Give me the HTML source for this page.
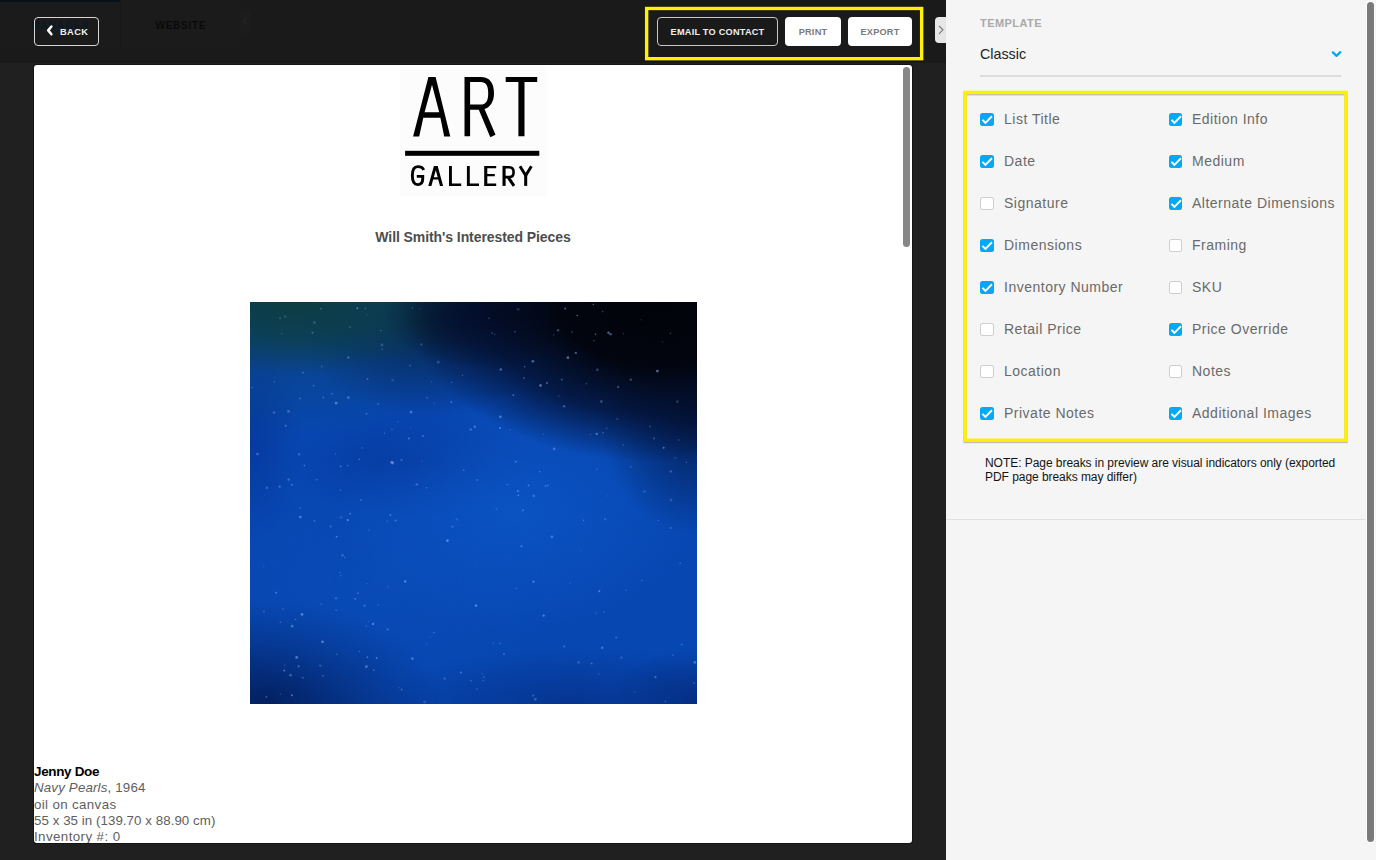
<!DOCTYPE html>
<html><head><meta charset="utf-8">
<style>
*{box-sizing:border-box;margin:0;padding:0}
html,body{width:1376px;height:860px;overflow:hidden;background:#202020;font-family:"Liberation Sans",sans-serif}
.abs{position:absolute}
#topbar{left:0;top:0;width:946px;height:63px;background:#1a1a1a}
#navline{left:0;top:0;width:120px;height:2px;background:#07111b}
.ghost{position:absolute;font-weight:bold;font-size:10px;letter-spacing:1px;white-space:nowrap}
.btn{position:absolute;border-radius:4px;font-weight:bold;font-size:9.2px;letter-spacing:0.22px;text-align:center;white-space:nowrap}
#back{left:34px;top:17px;width:65px;height:29px;border:1.5px solid #d6d6d6;color:#f4f4f4}
#email{left:657px;top:17px;width:121px;height:29px;border:1.5px solid #c8c8c8;color:#f0f0f0;line-height:28px}
#print{left:785px;top:17px;width:56px;height:29px;background:#fff;color:#7a7a7a;line-height:31px}
#export{left:848px;top:17px;width:64px;height:29px;background:#fff;color:#7a7a7a;line-height:31px}
#ybox1{left:645px;top:7px;width:278px;height:54px;border:3.5px solid #fff200}
#rtab{left:935px;top:17px;width:11px;height:26px;background:#e6e6e6;border-radius:4px 0 0 4px}
#page{left:34px;top:65px;width:878px;height:778px;background:#fff;border-radius:3px;overflow:hidden;box-shadow:0 0 0 1px #141414}
#pscroll{left:903px;top:67px;width:6.5px;height:180px;background:#878787;border-radius:3.5px}
#right{left:946px;top:0;width:430px;height:860px;background:#f5f5f5}
#rscroll{left:1367px;top:2px;width:7px;height:840px;background:#7a7a7a;border-radius:3.5px;box-shadow:0 0 0 1px #fff}
#ybox2{left:963.5px;top:90.5px;width:384.5px;height:351.5px;border:3.5px solid #ffee00;box-shadow:inset 0 1px 2px rgba(0,0,0,.25),0 1px 2px rgba(0,0,0,.2)}
.cb{position:absolute;width:13.6px;height:13.4px;border-radius:2.5px;background:#fff;box-shadow:inset 0 0 0 1px #cfcfcf}
.cb.on{background:#03a9f4;box-shadow:none}
.cb svg{position:absolute;left:0;top:0}
.lbl{position:absolute;font-size:14px;color:#6a6a6a;letter-spacing:0.5px;white-space:nowrap;line-height:22px}

.ml{position:absolute;left:0;white-space:nowrap}
#artbg{left:249.5px;top:301.5px;width:447px;height:402.5px;background:
radial-gradient(ellipse 58% 40% at 92% 0%, #010309 0%, #02050f 40%, rgba(3,12,40,.75) 70%, rgba(3,30,100,0) 100%),
radial-gradient(ellipse 22% 30% at 100% 28%, rgba(2,12,40,.7) 0%, rgba(3,30,100,0) 100%),
radial-gradient(ellipse 25% 14% at 55% 3%, rgba(2,8,25,.85) 0%, rgba(2,8,25,0) 100%),
radial-gradient(ellipse 40% 18% at 10% 0%, #0c3d42 0%, rgba(12,62,72,.75) 50%, rgba(13,62,90,0) 100%),
radial-gradient(ellipse 48% 34% at 8% 0%, rgba(13,62,80,.6) 0%, rgba(13,62,90,0) 100%),
radial-gradient(ellipse 30% 25% at 40% 4%, rgba(6,28,60,.9) 0%, rgba(6,28,60,0) 100%),
radial-gradient(ellipse 40% 30% at 60% 52%, rgba(12,86,198,.8) 0%, rgba(12,86,198,0) 100%),
radial-gradient(ellipse 42% 30% at 30% 70%, rgba(10,78,186,.5) 0%, rgba(10,78,186,0) 100%),
radial-gradient(ellipse 40% 26% at 3% 100%, rgba(3,30,92,.95) 0%, rgba(3,30,92,0) 100%),
radial-gradient(ellipse 45% 14% at 72% 100%, rgba(5,45,130,.7) 0%, rgba(5,45,130,0) 100%),
radial-gradient(ellipse 20% 14% at 100% 100%, rgba(4,36,110,.7) 0%, rgba(4,36,110,0) 100%),
radial-gradient(ellipse 28% 14% at 36% 40%, rgba(5,45,140,.5) 0%, rgba(5,45,140,0) 100%),
radial-gradient(ellipse 12% 25% at 0% 35%, rgba(5,45,140,.5) 0%, rgba(5,45,140,0) 100%),
#0747b2}
</style></head><body>
<div id="topbar" class="abs"></div>
<div class="abs" style="left:0;top:0;width:240px;height:47px;background:#1b1b1b"></div>
<div class="abs" style="left:120px;top:0;width:1px;height:47px;background:#171717"></div>
<div class="abs" style="left:240px;top:9px;width:10px;height:24px;background:#1c1c1c;border-radius:0 3px 3px 0"></div>
<svg class="abs" style="left:240px;top:9px" width="10" height="24" viewBox="0 0 10 24"><path d="M6.5 8.5 L3.8 12 L6.5 15.5" fill="none" stroke="#2a2a2a" stroke-width="1"/></svg>
<div id="navline" class="abs"></div>
<div class="ghost" style="left:31px;top:20px;color:#0b1825">MANAGER</div>
<div class="ghost" style="left:155.5px;top:20px;color:#0a0a0a;letter-spacing:0.75px">WEBSITE</div>

<div id="back" class="btn"></div>
<svg class="abs" style="left:44px;top:22px" width="12" height="16" viewBox="0 0 12 16"><path d="M7.4 4.5 L4.2 8.4 L7.4 12.3" fill="none" stroke="#fff" stroke-width="2.5" stroke-linecap="round" stroke-linejoin="round"/></svg>
<div class="abs" style="left:60px;top:23.5px;font-size:9.3px;font-weight:bold;letter-spacing:0.4px;color:#f2f2f2;line-height:16px">BACK</div>
<svg class="abs" style="left:640px;top:0" width="290" height="66" viewBox="640 0 290 66"><rect x="646.65" y="8.5" width="275" height="50.2" fill="none" stroke="#000" stroke-opacity=".5" stroke-width="3.4" transform="translate(0,1)"/><rect x="646.65" y="8.5" width="275" height="50.2" fill="none" stroke="#fff200" stroke-width="3.4"/></svg>
<div id="email" class="btn">EMAIL TO CONTACT</div>
<div id="print" class="btn">PRINT</div>
<div id="export" class="btn">EXPORT</div>
<div id="rtab" class="abs"></div>
<svg class="abs" style="left:935px;top:17px" width="11" height="26" viewBox="0 0 11 26"><path d="M4 9 L7.9 12.8 L4 16.9" fill="none" stroke="#7a7a7a" stroke-width="1.2"/></svg>

<div id="page" class="abs"></div>
<svg class="abs" style="left:0;top:0" width="1376" height="860" viewBox="0 0 1376 860">
<rect x="400" y="66" width="146" height="130" fill="#fcfcfc"/>
<path fill-rule="evenodd" fill="#000" d="M428.4 76.9 L435.6 76.9 L450.3 136.6 L444.2 136.6 L440.4 117.8 L423.3 117.8 L419.2 136.6 L413.1 136.6 Z M432 84.8 L439.2 112.2 L424.6 112.2 Z"/>
<path fill-rule="evenodd" fill="#000" d="M464.5 76.9 L480.5 76.9 C489.5 76.9 494 82.5 494 93.2 C494 101.5 490.5 107 484.5 109 L495.5 134.8 L490.3 137.2 L478.8 109.7 L470.1 109.7 L470.1 136.2 L464.5 136.2 Z M470.1 82 L470.1 104.6 L480.5 104.6 C486 104.6 488.2 101 488.2 93.2 C488.2 85.5 486 82 480.5 82 Z"/>
<path fill="#000" d="M505.7 76.9 L537.2 76.9 L537.2 82 L524.5 82 L524.5 136.2 L518.4 136.2 L518.4 82 L505.7 82 Z"/>
<rect x="405.1" y="150.8" width="134.2" height="5" fill="#000"/>
<path fill="none" stroke="#000" stroke-width="2.9" d="M423.6 170 C423 167.8 421 166.65 417.6 166.65 C413.8 166.65 412.35 169.5 412.35 175.6 C412.35 181.8 413.8 184.65 417.6 184.65 C421.4 184.65 422.75 182.4 422.75 178.5 L422.75 176.4 L416.8 176.4"/>
<path fill-rule="evenodd" fill="#000" d="M433.9 165.9 L437.7 165.9 L443.1 185.9 L440 185.9 L438.2 179.4 L433.2 179.4 L431.4 185.9 L428.3 185.9 Z M435.8 170.3 L437.7 177.3 L433.8 177.3 Z"/>
<path fill="#000" d="M449 165.9 L451.9 165.9 L451.9 183.4 L461.2 183.4 L461.2 185.9 L449 185.9 Z"/>
<path fill="#000" d="M466.9 165.9 L469.8 165.9 L469.8 183.4 L479 183.4 L479 185.9 L466.9 185.9 Z"/>
<path fill="#000" d="M484.2 165.9 L496.2 165.9 L496.2 168.2 L487.3 168.2 L487.3 174 L494.8 174 L494.8 176.2 L487.3 176.2 L487.3 183.5 L496.2 183.5 L496.2 185.9 L484.2 185.9 Z"/>
<rect x="502.5" y="165.9" width="3.1" height="20" fill="#000"/>
<path fill="none" stroke="#000" stroke-width="2.6" d="M504 167.2 L509.3 167.2 C512.6 167.2 513.6 169.4 513.6 172.2 C513.6 175 512.6 177.1 509.3 177.1 L504 177.1"/>
<path fill="none" stroke="#000" stroke-width="3" d="M508.4 177.6 L514 185.9"/>
<path fill="none" stroke="#000" stroke-width="2.9" d="M520 166.3 L525.7 175.6 L531.4 166.3"/>
<rect x="524.2" y="175" width="3" height="10.9" fill="#000"/>
</svg>
<div class="abs" style="left:34px;top:229.3px;width:878px;text-align:center;font-size:14px;font-weight:bold;color:#4d4d4d;letter-spacing:-0.08px">Will Smith's Interested Pieces</div>
<div id="artbg" class="abs"></div>
<svg id="art" class="abs" width="447" height="402.5" viewBox="0 0 447 402.5" style="left:249.5px;top:301.5px">
<defs><filter id="bl" x="-100%" y="-100%" width="300%" height="300%"><feGaussianBlur stdDeviation="38"/></filter>
<filter id="bl2" x="-100%" y="-100%" width="300%" height="300%"><feGaussianBlur stdDeviation="20"/></filter>
<filter id="sb" x="-5%" y="-5%" width="110%" height="110%"><feGaussianBlur stdDeviation="0.45"/></filter><clipPath id="cp"><rect width="447" height="402.5"/></clipPath></defs>
<g clip-path="url(#cp)">
<g filter="url(#sb)"><circle cx="202.4" cy="224.8" r="1.0" fill="#8fb4ff" fill-opacity="0.36"/>
<circle cx="380.8" cy="77.6" r="1.2" fill="#8fb4ff" fill-opacity="0.37"/>
<circle cx="274.0" cy="76.1" r="1.0" fill="#8fb4ff" fill-opacity="0.31"/>
<circle cx="42.2" cy="324.2" r="1.4" fill="#8fb4ff" fill-opacity="0.42"/>
<circle cx="265.8" cy="159.7" r="1.0" fill="#8fb4ff" fill-opacity="0.43"/>
<circle cx="274.7" cy="64.7" r="0.7" fill="#8fb4ff" fill-opacity="0.49"/>
<circle cx="30.0" cy="16.2" r="0.8" fill="#8fb4ff" fill-opacity="0.41"/>
<circle cx="346.7" cy="131.9" r="1.2" fill="#8fb4ff" fill-opacity="0.49"/>
<circle cx="295.5" cy="184.0" r="0.9" fill="#8fb4ff" fill-opacity="0.34"/>
<circle cx="114.5" cy="303.7" r="1.2" fill="#8fb4ff" fill-opacity="0.30"/>
<circle cx="33.1" cy="307.0" r="1.0" fill="#8fb4ff" fill-opacity="0.24"/>
<circle cx="130.9" cy="28.6" r="0.7" fill="#8fb4ff" fill-opacity="0.50"/>
<circle cx="2.2" cy="85.5" r="0.7" fill="#8fb4ff" fill-opacity="0.36"/>
<circle cx="436.3" cy="160.2" r="0.7" fill="#8fb4ff" fill-opacity="0.40"/>
<circle cx="89.9" cy="270.6" r="0.9" fill="#8fb4ff" fill-opacity="0.23"/>
<circle cx="149.3" cy="385.7" r="0.7" fill="#8fb4ff" fill-opacity="0.25"/>
<circle cx="315.2" cy="6.4" r="1.0" fill="#8fb4ff" fill-opacity="0.48"/>
<circle cx="80.7" cy="224.6" r="1.0" fill="#8fb4ff" fill-opacity="0.38"/>
<circle cx="172.0" cy="159.2" r="0.8" fill="#8fb4ff" fill-opacity="0.20"/>
<circle cx="384.9" cy="390.0" r="0.7" fill="#8fb4ff" fill-opacity="0.27"/>
<circle cx="176.7" cy="342.0" r="0.7" fill="#8fb4ff" fill-opacity="0.21"/>
<circle cx="66.8" cy="177.7" r="0.7" fill="#8fb4ff" fill-opacity="0.47"/>
<circle cx="147.7" cy="119.9" r="0.7" fill="#8fb4ff" fill-opacity="0.23"/>
<circle cx="94.5" cy="255.4" r="0.7" fill="#8fb4ff" fill-opacity="0.41"/>
<circle cx="166.7" cy="182.4" r="1.2" fill="#8fb4ff" fill-opacity="0.37"/>
<circle cx="70.3" cy="363.6" r="1.2" fill="#8fb4ff" fill-opacity="0.29"/>
<circle cx="86.1" cy="296.3" r="1.2" fill="#8fb4ff" fill-opacity="0.27"/>
<circle cx="422.9" cy="353.1" r="1.0" fill="#8fb4ff" fill-opacity="0.22"/>
<circle cx="50.3" cy="205.9" r="0.9" fill="#8fb4ff" fill-opacity="0.28"/>
<circle cx="314.1" cy="104.3" r="1.2" fill="#8fb4ff" fill-opacity="0.37"/>
<circle cx="232.4" cy="371.8" r="0.8" fill="#8fb4ff" fill-opacity="0.28"/>
<circle cx="249.8" cy="341.3" r="0.9" fill="#8fb4ff" fill-opacity="0.27"/>
<circle cx="184.3" cy="101.1" r="0.7" fill="#8fb4ff" fill-opacity="0.26"/>
<circle cx="162.4" cy="356.6" r="1.4" fill="#8fb4ff" fill-opacity="0.46"/>
<circle cx="233.2" cy="378.8" r="0.7" fill="#8fb4ff" fill-opacity="0.37"/>
<circle cx="160.4" cy="126.1" r="0.7" fill="#8fb4ff" fill-opacity="0.21"/>
<circle cx="283.8" cy="193.9" r="1.4" fill="#8fb4ff" fill-opacity="0.31"/>
<circle cx="62.5" cy="30.8" r="1.0" fill="#8fb4ff" fill-opacity="0.39"/>
<circle cx="328.5" cy="360.3" r="1.4" fill="#8fb4ff" fill-opacity="0.25"/>
<circle cx="428.8" cy="138.0" r="0.7" fill="#8fb4ff" fill-opacity="0.44"/>
<circle cx="352.2" cy="345.7" r="1.2" fill="#8fb4ff" fill-opacity="0.43"/>
<circle cx="170.0" cy="7.0" r="0.7" fill="#8fb4ff" fill-opacity="0.23"/>
<circle cx="285.3" cy="397.3" r="1.4" fill="#8fb4ff" fill-opacity="0.32"/>
<circle cx="206.9" cy="217.4" r="1.2" fill="#8fb4ff" fill-opacity="0.21"/>
<circle cx="268.4" cy="193.4" r="0.8" fill="#8fb4ff" fill-opacity="0.54"/>
<circle cx="52.0" cy="312.4" r="1.4" fill="#8fb4ff" fill-opacity="0.52"/>
<circle cx="115.3" cy="6.5" r="0.9" fill="#8fb4ff" fill-opacity="0.25"/>
<circle cx="273.0" cy="208.3" r="0.9" fill="#8fb4ff" fill-opacity="0.43"/>
<circle cx="297.0" cy="81.0" r="1.0" fill="#8fb4ff" fill-opacity="0.48"/>
<circle cx="336.3" cy="81.7" r="0.8" fill="#8fb4ff" fill-opacity="0.33"/>
<circle cx="260.3" cy="128.0" r="0.8" fill="#8fb4ff" fill-opacity="0.25"/>
<circle cx="30.4" cy="392.2" r="0.8" fill="#8fb4ff" fill-opacity="0.24"/>
<circle cx="210.8" cy="370.4" r="1.0" fill="#8fb4ff" fill-opacity="0.42"/>
<circle cx="220.8" cy="127.5" r="1.2" fill="#8fb4ff" fill-opacity="0.36"/>
<circle cx="35.1" cy="14.5" r="1.2" fill="#8fb4ff" fill-opacity="0.21"/>
<circle cx="352.6" cy="9.6" r="0.8" fill="#8fb4ff" fill-opacity="0.34"/>
<circle cx="86.1" cy="308.1" r="0.9" fill="#8fb4ff" fill-opacity="0.28"/>
<circle cx="64.4" cy="20.7" r="1.4" fill="#8fb4ff" fill-opacity="0.24"/>
<circle cx="50.3" cy="215.1" r="1.4" fill="#8fb4ff" fill-opacity="0.48"/>
<circle cx="212.5" cy="73.1" r="0.7" fill="#8fb4ff" fill-opacity="0.46"/>
<circle cx="238.9" cy="16.4" r="0.8" fill="#8fb4ff" fill-opacity="0.30"/>
<circle cx="155.2" cy="279.5" r="1.2" fill="#8fb4ff" fill-opacity="0.55"/>
<circle cx="72.5" cy="339.8" r="1.4" fill="#8fb4ff" fill-opacity="0.52"/>
<circle cx="40.6" cy="373.2" r="1.4" fill="#8fb4ff" fill-opacity="0.34"/>
<circle cx="201.6" cy="80.4" r="0.7" fill="#8fb4ff" fill-opacity="0.33"/>
<circle cx="254.0" cy="352.0" r="0.9" fill="#8fb4ff" fill-opacity="0.36"/>
<circle cx="290.5" cy="83.5" r="1.4" fill="#8fb4ff" fill-opacity="0.50"/>
<circle cx="109.3" cy="157.3" r="0.7" fill="#8fb4ff" fill-opacity="0.54"/>
<circle cx="38.7" cy="177.5" r="1.2" fill="#8fb4ff" fill-opacity="0.35"/>
<circle cx="123.9" cy="368.1" r="0.8" fill="#8fb4ff" fill-opacity="0.48"/>
<circle cx="30.4" cy="320.3" r="0.8" fill="#8fb4ff" fill-opacity="0.39"/>
<circle cx="444.9" cy="360.4" r="1.4" fill="#8fb4ff" fill-opacity="0.44"/>
<circle cx="421.0" cy="198.0" r="1.4" fill="#8fb4ff" fill-opacity="0.23"/>
<circle cx="100.1" cy="211.6" r="0.9" fill="#8fb4ff" fill-opacity="0.49"/>
<circle cx="250.8" cy="67.4" r="1.2" fill="#8fb4ff" fill-opacity="0.50"/>
<circle cx="250.1" cy="126.1" r="1.0" fill="#8fb4ff" fill-opacity="0.53"/>
<circle cx="64.5" cy="218.8" r="0.9" fill="#8fb4ff" fill-opacity="0.40"/>
<circle cx="91.0" cy="215.3" r="1.2" fill="#8fb4ff" fill-opacity="0.20"/>
<circle cx="408.4" cy="218.5" r="0.7" fill="#8fb4ff" fill-opacity="0.37"/>
<circle cx="308.1" cy="28.2" r="1.2" fill="#8fb4ff" fill-opacity="0.36"/>
<circle cx="111.1" cy="198.2" r="0.9" fill="#8fb4ff" fill-opacity="0.35"/>
<circle cx="142.5" cy="78.2" r="1.2" fill="#8fb4ff" fill-opacity="0.21"/>
<circle cx="117.3" cy="281.4" r="0.7" fill="#8fb4ff" fill-opacity="0.21"/>
<circle cx="70.9" cy="6.7" r="0.9" fill="#8fb4ff" fill-opacity="0.31"/>
<circle cx="325.8" cy="50.9" r="1.2" fill="#8fb4ff" fill-opacity="0.42"/>
<circle cx="319.9" cy="281.1" r="0.7" fill="#8fb4ff" fill-opacity="0.33"/>
<circle cx="92.5" cy="253.3" r="1.4" fill="#8fb4ff" fill-opacity="0.28"/>
<circle cx="97.8" cy="218.1" r="1.2" fill="#8fb4ff" fill-opacity="0.50"/>
<circle cx="105.1" cy="296.8" r="0.9" fill="#8fb4ff" fill-opacity="0.52"/>
<circle cx="141.9" cy="127.4" r="0.8" fill="#8fb4ff" fill-opacity="0.28"/>
<circle cx="108.0" cy="291.2" r="0.9" fill="#8fb4ff" fill-opacity="0.34"/>
<circle cx="194.6" cy="376.6" r="1.4" fill="#8fb4ff" fill-opacity="0.24"/>
<circle cx="91.0" cy="273.6" r="0.9" fill="#8fb4ff" fill-opacity="0.24"/>
<circle cx="226.0" cy="303.7" r="1.4" fill="#8fb4ff" fill-opacity="0.49"/>
<circle cx="357.7" cy="193.9" r="0.7" fill="#8fb4ff" fill-opacity="0.21"/>
<circle cx="246.4" cy="206.9" r="0.8" fill="#8fb4ff" fill-opacity="0.27"/>
<circle cx="52.9" cy="70.7" r="0.8" fill="#8fb4ff" fill-opacity="0.55"/>
<circle cx="412.6" cy="39.9" r="0.7" fill="#8fb4ff" fill-opacity="0.25"/>
<circle cx="303.7" cy="32.9" r="0.7" fill="#8fb4ff" fill-opacity="0.31"/>
<circle cx="268.2" cy="7.3" r="1.4" fill="#8fb4ff" fill-opacity="0.21"/>
<circle cx="90.7" cy="164.4" r="0.9" fill="#8fb4ff" fill-opacity="0.46"/>
<circle cx="181.5" cy="79.7" r="0.8" fill="#8fb4ff" fill-opacity="0.23"/>
<circle cx="353.0" cy="130.8" r="0.7" fill="#8fb4ff" fill-opacity="0.48"/>
<circle cx="314.2" cy="344.6" r="1.0" fill="#8fb4ff" fill-opacity="0.40"/>
<circle cx="86.6" cy="234.7" r="0.9" fill="#8fb4ff" fill-opacity="0.48"/>
<circle cx="116.4" cy="364.7" r="1.4" fill="#8fb4ff" fill-opacity="0.46"/>
<circle cx="72.9" cy="373.7" r="0.8" fill="#8fb4ff" fill-opacity="0.51"/>
<circle cx="391.8" cy="278.5" r="0.8" fill="#8fb4ff" fill-opacity="0.34"/>
<circle cx="322.1" cy="30.1" r="0.9" fill="#8fb4ff" fill-opacity="0.31"/>
<circle cx="46.7" cy="355.4" r="1.4" fill="#8fb4ff" fill-opacity="0.52"/>
<circle cx="24.0" cy="110.6" r="1.4" fill="#8fb4ff" fill-opacity="0.30"/>
<circle cx="97.7" cy="163.6" r="0.8" fill="#8fb4ff" fill-opacity="0.39"/>
<circle cx="174.6" cy="400.0" r="1.4" fill="#8fb4ff" fill-opacity="0.24"/>
<circle cx="49.9" cy="96.3" r="1.0" fill="#8fb4ff" fill-opacity="0.34"/>
<circle cx="24.4" cy="79.8" r="1.0" fill="#8fb4ff" fill-opacity="0.20"/>
<circle cx="116.5" cy="111.7" r="0.9" fill="#8fb4ff" fill-opacity="0.39"/>
<circle cx="227.0" cy="386.9" r="0.7" fill="#8fb4ff" fill-opacity="0.42"/>
<circle cx="360.6" cy="32.3" r="1.2" fill="#8fb4ff" fill-opacity="0.43"/>
<circle cx="425.2" cy="155.8" r="0.8" fill="#8fb4ff" fill-opacity="0.34"/>
<circle cx="431.7" cy="342.6" r="1.2" fill="#8fb4ff" fill-opacity="0.22"/>
<circle cx="420.8" cy="169.4" r="1.2" fill="#8fb4ff" fill-opacity="0.34"/>
<circle cx="140.4" cy="213.1" r="1.0" fill="#8fb4ff" fill-opacity="0.43"/>
<circle cx="250.4" cy="114.8" r="1.4" fill="#8fb4ff" fill-opacity="0.46"/>
<circle cx="13.9" cy="309.5" r="1.2" fill="#8fb4ff" fill-opacity="0.21"/>
<circle cx="71.4" cy="302.3" r="1.0" fill="#8fb4ff" fill-opacity="0.22"/>
<circle cx="141.6" cy="160.3" r="1.2" fill="#8fb4ff" fill-opacity="0.55"/>
<circle cx="420.4" cy="31.3" r="0.8" fill="#8fb4ff" fill-opacity="0.35"/>
<circle cx="233.8" cy="375.0" r="1.0" fill="#8fb4ff" fill-opacity="0.25"/>
<circle cx="427.3" cy="99.6" r="1.4" fill="#8fb4ff" fill-opacity="0.24"/>
<circle cx="278.5" cy="183.4" r="0.8" fill="#8fb4ff" fill-opacity="0.50"/>
<circle cx="160.0" cy="63.6" r="0.9" fill="#8fb4ff" fill-opacity="0.36"/>
<circle cx="297.9" cy="183.3" r="0.9" fill="#8fb4ff" fill-opacity="0.42"/>
<circle cx="304.1" cy="146.9" r="1.4" fill="#8fb4ff" fill-opacity="0.39"/>
<circle cx="444.0" cy="381.1" r="0.8" fill="#8fb4ff" fill-opacity="0.37"/>
<circle cx="224.8" cy="124.8" r="1.2" fill="#8fb4ff" fill-opacity="0.42"/>
<circle cx="161.1" cy="110.1" r="1.4" fill="#8fb4ff" fill-opacity="0.45"/>
<circle cx="311.7" cy="77.6" r="0.9" fill="#8fb4ff" fill-opacity="0.46"/>
<circle cx="86.1" cy="101.1" r="1.4" fill="#8fb4ff" fill-opacity="0.52"/>
<circle cx="391.3" cy="17.7" r="0.7" fill="#8fb4ff" fill-opacity="0.20"/>
<circle cx="117.0" cy="12.7" r="0.7" fill="#8fb4ff" fill-opacity="0.24"/>
<circle cx="242.0" cy="30.9" r="0.7" fill="#8fb4ff" fill-opacity="0.52"/>
<circle cx="73.3" cy="95.4" r="0.9" fill="#8fb4ff" fill-opacity="0.37"/>
<circle cx="158.9" cy="136.6" r="1.0" fill="#8fb4ff" fill-opacity="0.46"/>
<circle cx="373.5" cy="31.6" r="0.7" fill="#8fb4ff" fill-opacity="0.36"/>
<circle cx="366.2" cy="335.5" r="1.0" fill="#8fb4ff" fill-opacity="0.35"/>
<circle cx="116.3" cy="324.3" r="0.9" fill="#8fb4ff" fill-opacity="0.25"/>
<circle cx="145.6" cy="218.4" r="1.0" fill="#8fb4ff" fill-opacity="0.40"/>
<circle cx="345.5" cy="32.3" r="0.8" fill="#8fb4ff" fill-opacity="0.52"/>
<circle cx="340.5" cy="132.5" r="0.8" fill="#8fb4ff" fill-opacity="0.28"/>
<circle cx="293.2" cy="132.2" r="0.7" fill="#8fb4ff" fill-opacity="0.31"/>
<circle cx="197.4" cy="238.7" r="1.4" fill="#8fb4ff" fill-opacity="0.52"/>
<circle cx="142.7" cy="161.0" r="1.4" fill="#8fb4ff" fill-opacity="0.51"/>
<circle cx="112.0" cy="146.0" r="0.9" fill="#8fb4ff" fill-opacity="0.21"/>
<circle cx="301.9" cy="234.8" r="1.4" fill="#8fb4ff" fill-opacity="0.40"/>
<circle cx="355.1" cy="217.1" r="1.2" fill="#8fb4ff" fill-opacity="0.26"/>
<circle cx="41.8" cy="182.8" r="0.9" fill="#8fb4ff" fill-opacity="0.48"/>
<circle cx="100.0" cy="25.0" r="0.8" fill="#8fb4ff" fill-opacity="0.40"/>
<circle cx="430.1" cy="261.2" r="0.7" fill="#8fb4ff" fill-opacity="0.40"/>
<circle cx="137.3" cy="219.1" r="0.9" fill="#8fb4ff" fill-opacity="0.23"/>
<circle cx="282.9" cy="59.3" r="1.4" fill="#8fb4ff" fill-opacity="0.49"/>
<circle cx="404.1" cy="136.6" r="1.0" fill="#8fb4ff" fill-opacity="0.34"/>
<circle cx="151.7" cy="387.4" r="1.0" fill="#8fb4ff" fill-opacity="0.37"/>
<circle cx="358.5" cy="30.8" r="1.2" fill="#8fb4ff" fill-opacity="0.52"/>
<circle cx="183.9" cy="330.8" r="0.7" fill="#8fb4ff" fill-opacity="0.48"/>
<circle cx="371.4" cy="355.7" r="1.4" fill="#8fb4ff" fill-opacity="0.21"/>
<circle cx="162.4" cy="6.0" r="0.7" fill="#8fb4ff" fill-opacity="0.35"/>
<circle cx="188.3" cy="60.2" r="1.4" fill="#8fb4ff" fill-opacity="0.26"/>
<circle cx="394.5" cy="189.6" r="1.4" fill="#8fb4ff" fill-opacity="0.24"/>
<circle cx="29.6" cy="184.6" r="1.2" fill="#8fb4ff" fill-opacity="0.37"/>
<circle cx="356.6" cy="126.4" r="0.8" fill="#8fb4ff" fill-opacity="0.26"/>
<circle cx="98.3" cy="95.7" r="1.4" fill="#8fb4ff" fill-opacity="0.37"/>
<circle cx="227.3" cy="177.9" r="0.9" fill="#8fb4ff" fill-opacity="0.34"/>
<circle cx="405.4" cy="375.1" r="1.2" fill="#8fb4ff" fill-opacity="0.37"/>
<circle cx="117.4" cy="355.2" r="0.9" fill="#8fb4ff" fill-opacity="0.43"/>
<circle cx="343.9" cy="38.8" r="0.8" fill="#8fb4ff" fill-opacity="0.34"/>
<circle cx="98.3" cy="55.4" r="1.0" fill="#8fb4ff" fill-opacity="0.54"/>
<circle cx="354.1" cy="310.1" r="0.7" fill="#8fb4ff" fill-opacity="0.43"/>
<circle cx="107.3" cy="6.3" r="1.0" fill="#8fb4ff" fill-opacity="0.52"/>
<circle cx="201.4" cy="100.1" r="1.0" fill="#8fb4ff" fill-opacity="0.41"/>
<circle cx="71.7" cy="64.5" r="0.9" fill="#8fb4ff" fill-opacity="0.25"/>
<circle cx="330.6" cy="248.6" r="0.7" fill="#8fb4ff" fill-opacity="0.25"/>
<circle cx="343.3" cy="2.5" r="0.8" fill="#8fb4ff" fill-opacity="0.49"/>
<circle cx="38.5" cy="109.4" r="1.4" fill="#8fb4ff" fill-opacity="0.38"/>
<circle cx="333.6" cy="218.3" r="0.7" fill="#8fb4ff" fill-opacity="0.48"/>
<circle cx="368.1" cy="84.9" r="1.2" fill="#8fb4ff" fill-opacity="0.34"/>
<circle cx="220.9" cy="378.7" r="0.9" fill="#8fb4ff" fill-opacity="0.31"/>
<circle cx="35.7" cy="123.7" r="1.0" fill="#8fb4ff" fill-opacity="0.43"/>
<circle cx="31.7" cy="31.6" r="0.8" fill="#8fb4ff" fill-opacity="0.24"/>
<circle cx="176.6" cy="185.8" r="0.7" fill="#8fb4ff" fill-opacity="0.43"/>
<circle cx="7.5" cy="152.1" r="1.4" fill="#8fb4ff" fill-opacity="0.37"/>
<circle cx="132.0" cy="47.1" r="0.7" fill="#8fb4ff" fill-opacity="0.50"/>
<circle cx="376.1" cy="288.3" r="0.8" fill="#8fb4ff" fill-opacity="0.30"/>
<circle cx="151.5" cy="158.1" r="1.4" fill="#8fb4ff" fill-opacity="0.23"/>
<circle cx="85.6" cy="151.9" r="0.7" fill="#8fb4ff" fill-opacity="0.32"/>
<circle cx="420.7" cy="226.0" r="0.9" fill="#8fb4ff" fill-opacity="0.36"/>
<circle cx="171.4" cy="42.5" r="1.2" fill="#8fb4ff" fill-opacity="0.23"/>
<circle cx="180.2" cy="335.1" r="0.7" fill="#8fb4ff" fill-opacity="0.24"/>
<circle cx="16.3" cy="395.0" r="1.0" fill="#8fb4ff" fill-opacity="0.34"/>
<circle cx="34.2" cy="368.4" r="1.0" fill="#8fb4ff" fill-opacity="0.52"/>
<circle cx="63.6" cy="83.8" r="0.8" fill="#8fb4ff" fill-opacity="0.49"/>
<circle cx="173.0" cy="133.9" r="1.0" fill="#8fb4ff" fill-opacity="0.42"/>
<circle cx="351.4" cy="99.5" r="1.2" fill="#8fb4ff" fill-opacity="0.39"/>
<circle cx="117.5" cy="77.1" r="0.9" fill="#8fb4ff" fill-opacity="0.43"/>
<circle cx="49.1" cy="152.3" r="1.2" fill="#8fb4ff" fill-opacity="0.32"/>
<circle cx="132.0" cy="42.9" r="1.4" fill="#8fb4ff" fill-opacity="0.26"/>
<circle cx="341.6" cy="361.4" r="0.9" fill="#8fb4ff" fill-opacity="0.41"/>
<circle cx="415.5" cy="399.3" r="0.8" fill="#8fb4ff" fill-opacity="0.40"/>
<circle cx="13.8" cy="264.5" r="0.7" fill="#8fb4ff" fill-opacity="0.25"/>
<circle cx="213.7" cy="168.2" r="0.9" fill="#8fb4ff" fill-opacity="0.32"/>
<circle cx="413.6" cy="145.8" r="1.0" fill="#8fb4ff" fill-opacity="0.51"/>
<circle cx="407.4" cy="69.1" r="1.4" fill="#8fb4ff" fill-opacity="0.55"/>
<circle cx="367.3" cy="116.9" r="0.9" fill="#8fb4ff" fill-opacity="0.28"/>
<circle cx="244.7" cy="32.4" r="0.7" fill="#8fb4ff" fill-opacity="0.34"/>
<circle cx="348.7" cy="372.1" r="0.8" fill="#8fb4ff" fill-opacity="0.31"/>
<circle cx="90.4" cy="188.3" r="0.8" fill="#8fb4ff" fill-opacity="0.38"/>
<circle cx="54.4" cy="163.5" r="0.9" fill="#8fb4ff" fill-opacity="0.38"/>
<circle cx="118.8" cy="228.1" r="0.9" fill="#8fb4ff" fill-opacity="0.22"/>
<circle cx="349.3" cy="289.2" r="1.0" fill="#8fb4ff" fill-opacity="0.54"/>
<circle cx="267.8" cy="189.0" r="1.0" fill="#8fb4ff" fill-opacity="0.51"/>
<circle cx="126.7" cy="355.9" r="1.0" fill="#8fb4ff" fill-opacity="0.49"/>
<circle cx="380.8" cy="164.8" r="1.0" fill="#8fb4ff" fill-opacity="0.24"/>
<circle cx="52.8" cy="375.7" r="0.9" fill="#8fb4ff" fill-opacity="0.38"/>
<circle cx="26.2" cy="290.8" r="1.0" fill="#8fb4ff" fill-opacity="0.46"/>
<circle cx="264.9" cy="29.8" r="0.7" fill="#8fb4ff" fill-opacity="0.50"/>
<circle cx="109.4" cy="349.5" r="0.7" fill="#8fb4ff" fill-opacity="0.37"/>
<circle cx="48.7" cy="364.2" r="1.2" fill="#8fb4ff" fill-opacity="0.31"/>
<circle cx="177.2" cy="95.9" r="0.7" fill="#8fb4ff" fill-opacity="0.55"/>
<circle cx="289.7" cy="169.8" r="0.7" fill="#8fb4ff" fill-opacity="0.52"/>
<circle cx="45.7" cy="317.4" r="0.7" fill="#8fb4ff" fill-opacity="0.51"/>
<circle cx="257.1" cy="182.4" r="0.9" fill="#8fb4ff" fill-opacity="0.29"/>
<circle cx="134.6" cy="131.3" r="0.7" fill="#8fb4ff" fill-opacity="0.35"/>
<circle cx="308.7" cy="93.9" r="0.9" fill="#8fb4ff" fill-opacity="0.21"/>
<circle cx="400.0" cy="124.5" r="1.0" fill="#8fb4ff" fill-opacity="0.25"/>
<circle cx="346.1" cy="311.1" r="0.8" fill="#8fb4ff" fill-opacity="0.30"/>
<circle cx="373.2" cy="143.0" r="1.0" fill="#8fb4ff" fill-opacity="0.21"/>
<circle cx="283.5" cy="279.8" r="1.2" fill="#8fb4ff" fill-opacity="0.42"/>
<circle cx="86.8" cy="352.3" r="0.7" fill="#8fb4ff" fill-opacity="0.43"/>
<circle cx="137.6" cy="327.4" r="0.9" fill="#8fb4ff" fill-opacity="0.50"/>
<circle cx="317.9" cy="55.7" r="1.4" fill="#8fb4ff" fill-opacity="0.53"/>
<circle cx="347.1" cy="167.2" r="0.8" fill="#8fb4ff" fill-opacity="0.28"/>
<circle cx="138.1" cy="284.8" r="0.8" fill="#8fb4ff" fill-opacity="0.29"/>
<circle cx="123.1" cy="321.9" r="1.2" fill="#8fb4ff" fill-opacity="0.51"/>
<circle cx="263.3" cy="93.1" r="0.9" fill="#8fb4ff" fill-opacity="0.51"/>
<circle cx="82.0" cy="91.9" r="0.8" fill="#8fb4ff" fill-opacity="0.42"/>
<circle cx="41.9" cy="393.2" r="1.0" fill="#8fb4ff" fill-opacity="0.52"/>
<circle cx="34.7" cy="363.1" r="0.7" fill="#8fb4ff" fill-opacity="0.41"/>
<circle cx="128.1" cy="101.9" r="1.2" fill="#8fb4ff" fill-opacity="0.23"/>
<circle cx="128.3" cy="302.8" r="0.8" fill="#8fb4ff" fill-opacity="0.26"/>
<circle cx="327.2" cy="13.5" r="0.8" fill="#8fb4ff" fill-opacity="0.55"/>
<circle cx="16.9" cy="185.7" r="1.2" fill="#8fb4ff" fill-opacity="0.33"/>
<circle cx="293.6" cy="313.6" r="1.2" fill="#8fb4ff" fill-opacity="0.49"/>
<circle cx="283.2" cy="393.4" r="1.2" fill="#8fb4ff" fill-opacity="0.26"/>
<circle cx="347.4" cy="67.7" r="1.2" fill="#8fb4ff" fill-opacity="0.35"/>
<circle cx="243.1" cy="341.3" r="0.9" fill="#8fb4ff" fill-opacity="0.21"/>
<circle cx="266.4" cy="286.5" r="0.8" fill="#8fb4ff" fill-opacity="0.31"/>
<circle cx="271.5" cy="244.2" r="1.2" fill="#8fb4ff" fill-opacity="0.35"/>
<circle cx="118.5" cy="319.8" r="0.7" fill="#8fb4ff" fill-opacity="0.24"/></g>
</g></svg>
<div class="abs" id="meta" style="left:34px;top:0;width:420px;height:842.8px;overflow:hidden;font-size:13.3px;line-height:16px;color:#5e5e5e">
<div class="ml" style="top:764.1px;font-weight:bold;color:#000;font-size:13.5px;letter-spacing:-0.35px">Jenny Doe</div>
<div class="ml" style="top:780.2px;letter-spacing:0.17px"><i>Navy Pearls</i>, 1964</div>
<div class="ml" style="top:796.6px;letter-spacing:0.37px">oil on canvas</div>
<div class="ml" style="top:812.7px;letter-spacing:0.06px">55 x 35 in (139.70 x 88.90 cm)</div>
<div class="ml" style="top:828.9px;letter-spacing:0.42px">Inventory #: 0</div>
</div>
<div id="pscroll" class="abs"></div>

<div id="right" class="abs"></div>

<div class="abs" style="left:980px;top:17px;font-size:11px;font-weight:bold;letter-spacing:0.43px;color:#a9a9a9">TEMPLATE</div>
<div class="abs" style="left:980px;top:46px;font-size:14.3px;color:#222">Classic</div>
<svg class="abs" style="left:1330px;top:49px" width="14" height="10" viewBox="0 0 14 10"><path d="M2.9 3.4 L6.5 6.8 L10.3 3.2" fill="none" stroke="#03a9f4" stroke-width="2.3" stroke-linecap="round" stroke-linejoin="round"/></svg>
<div class="abs" style="left:980px;top:75px;width:361px;height:1.5px;background:#dcdcdc"></div>
<svg class="abs" style="left:955px;top:85px" width="400" height="365" viewBox="955 85 400 365"><rect x="965" y="92.4" width="381" height="347.8" fill="none" stroke="#000" stroke-opacity=".22" stroke-width="3.4" transform="translate(0,1.3)" style="filter:blur(.6px)"/><rect x="965" y="92.4" width="381" height="347.8" fill="none" stroke="#ffef00" stroke-width="3.4"/></svg>
<div class="cb on" style="left:980.2px;top:112.7px"><svg width="13" height="13" viewBox="0 0 13 13"><path d="M3.1 7.5 L5.4 9.8 L11.3 3.9" fill="none" stroke="#fff" stroke-width="1.9" stroke-linecap="square"/></svg></div><div class="lbl" style="left:1004px;top:107.7px">List Title</div>
<div class="cb on" style="left:1168.7px;top:112.7px"><svg width="13" height="13" viewBox="0 0 13 13"><path d="M3.1 7.5 L5.4 9.8 L11.3 3.9" fill="none" stroke="#fff" stroke-width="1.9" stroke-linecap="square"/></svg></div><div class="lbl" style="left:1192px;top:107.7px">Edition Info</div>
<div class="cb on" style="left:980.2px;top:154.7px"><svg width="13" height="13" viewBox="0 0 13 13"><path d="M3.1 7.5 L5.4 9.8 L11.3 3.9" fill="none" stroke="#fff" stroke-width="1.9" stroke-linecap="square"/></svg></div><div class="lbl" style="left:1004px;top:149.7px">Date</div>
<div class="cb on" style="left:1168.7px;top:154.7px"><svg width="13" height="13" viewBox="0 0 13 13"><path d="M3.1 7.5 L5.4 9.8 L11.3 3.9" fill="none" stroke="#fff" stroke-width="1.9" stroke-linecap="square"/></svg></div><div class="lbl" style="left:1192px;top:149.7px">Medium</div>
<div class="cb" style="left:980.2px;top:196.7px"></div><div class="lbl" style="left:1004px;top:191.7px">Signature</div>
<div class="cb on" style="left:1168.7px;top:196.7px"><svg width="13" height="13" viewBox="0 0 13 13"><path d="M3.1 7.5 L5.4 9.8 L11.3 3.9" fill="none" stroke="#fff" stroke-width="1.9" stroke-linecap="square"/></svg></div><div class="lbl" style="left:1192px;top:191.7px">Alternate Dimensions</div>
<div class="cb on" style="left:980.2px;top:238.7px"><svg width="13" height="13" viewBox="0 0 13 13"><path d="M3.1 7.5 L5.4 9.8 L11.3 3.9" fill="none" stroke="#fff" stroke-width="1.9" stroke-linecap="square"/></svg></div><div class="lbl" style="left:1004px;top:233.7px">Dimensions</div>
<div class="cb" style="left:1168.7px;top:238.7px"></div><div class="lbl" style="left:1192px;top:233.7px">Framing</div>
<div class="cb on" style="left:980.2px;top:280.7px"><svg width="13" height="13" viewBox="0 0 13 13"><path d="M3.1 7.5 L5.4 9.8 L11.3 3.9" fill="none" stroke="#fff" stroke-width="1.9" stroke-linecap="square"/></svg></div><div class="lbl" style="left:1004px;top:275.7px">Inventory Number</div>
<div class="cb" style="left:1168.7px;top:280.7px"></div><div class="lbl" style="left:1192px;top:275.7px">SKU</div>
<div class="cb" style="left:980.2px;top:322.7px"></div><div class="lbl" style="left:1004px;top:317.7px">Retail Price</div>
<div class="cb on" style="left:1168.7px;top:322.7px"><svg width="13" height="13" viewBox="0 0 13 13"><path d="M3.1 7.5 L5.4 9.8 L11.3 3.9" fill="none" stroke="#fff" stroke-width="1.9" stroke-linecap="square"/></svg></div><div class="lbl" style="left:1192px;top:317.7px">Price Override</div>
<div class="cb" style="left:980.2px;top:364.7px"></div><div class="lbl" style="left:1004px;top:359.7px">Location</div>
<div class="cb" style="left:1168.7px;top:364.7px"></div><div class="lbl" style="left:1192px;top:359.7px">Notes</div>
<div class="cb on" style="left:980.2px;top:406.7px"><svg width="13" height="13" viewBox="0 0 13 13"><path d="M3.1 7.5 L5.4 9.8 L11.3 3.9" fill="none" stroke="#fff" stroke-width="1.9" stroke-linecap="square"/></svg></div><div class="lbl" style="left:1004px;top:401.7px">Private Notes</div>
<div class="cb on" style="left:1168.7px;top:406.7px"><svg width="13" height="13" viewBox="0 0 13 13"><path d="M3.1 7.5 L5.4 9.8 L11.3 3.9" fill="none" stroke="#fff" stroke-width="1.9" stroke-linecap="square"/></svg></div><div class="lbl" style="left:1192px;top:401.7px">Additional Images</div>
<div class="abs" style="left:985px;top:456.3px;width:360px;font-size:12px;line-height:14px;color:#141414;letter-spacing:-0.05px">NOTE: Page breaks in preview are visual indicators only (exported PDF page breaks may differ)</div>
<div class="abs" style="left:946px;top:519px;width:421px;height:1px;background:#e0e0e0"></div>
<div id="rscroll" class="abs"></div>
</body></html>
